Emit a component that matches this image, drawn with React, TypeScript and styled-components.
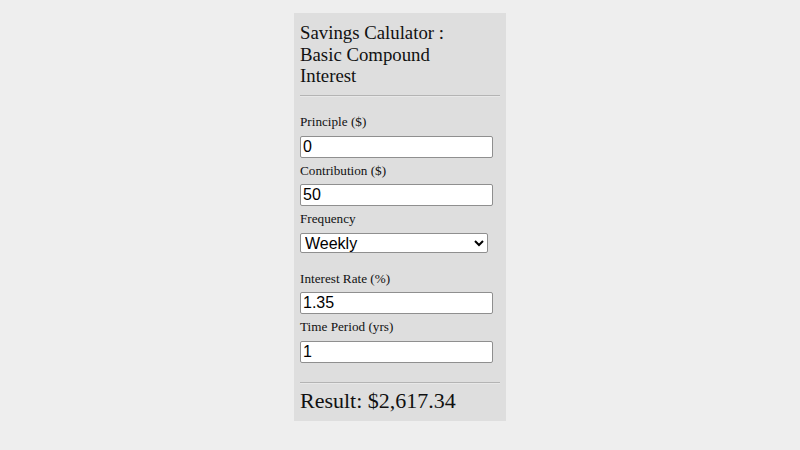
import React, { useState } from 'react';
import styled, { createGlobalStyle } from 'styled-components';

const GlobalStyle = createGlobalStyle`
    html, body {
        margin: 0;
        background-color: #eeeeee;
    }

    body {
        font-family: 'Liberation Serif', 'Times New Roman', serif;
        color: #111;
    }
`;

const App = () => {
    const [principle, setPrinciple] = useState('0');
    const [contribution, setContribution] = useState('50');
    const [frequency, setFrequency] = useState('Weekly');
    const [rate, setRate] = useState('1.35');
    const [years, setYears] = useState('1');

    // 계산 결과 (초기값 기준)
    const result = '$2,617.34';

    return (
        <Page>
            <GlobalStyle />
            <Panel>
                <Title>Savings Calulator : Basic Compound Interest</Title>
                <Divider />
                <Form>
                    <Field>
                        <Label>Principle ($)</Label>
                        <Input value={principle} onChange={(e) => setPrinciple(e.target.value)} />
                    </Field>
                    <Field>
                        <Label>Contribution ($)</Label>
                        <Input value={contribution} onChange={(e) => setContribution(e.target.value)} />
                    </Field>
                    <Field $spaced>
                        <Label>Frequency</Label>
                        <Select value={frequency} onChange={(e) => setFrequency(e.target.value)}>
                            <option>Daily</option>
                            <option>Weekly</option>
                            <option>Monthly</option>
                            <option>Yearly</option>
                        </Select>
                    </Field>
                    <Field>
                        <Label>Interest Rate (%)</Label>
                        <Input value={rate} onChange={(e) => setRate(e.target.value)} />
                    </Field>
                    <Field>
                        <Label>Time Period (yrs)</Label>
                        <Input value={years} onChange={(e) => setYears(e.target.value)} />
                    </Field>
                </Form>
                <Divider $bottom />
                <Result>Result: {result}</Result>
            </Panel>
        </Page>
    );
};

export default App;

const Page = styled.main`
    display: flex;
    justify-content: center;
    padding-top: 13px;
`;

const Panel = styled.section`
    width: 200px;
    padding: 9px 6px 7px 6px;
    background-color: #dedede;
`;

const Title = styled.h1`
    max-width: 180px;
    margin: 0;
    font-size: 18.8px;
    line-height: 21.5px;
    font-weight: normal;
`;

const Divider = styled.hr<{ $bottom?: boolean }>`
    margin: ${(p) => (p.$bottom ? '19px 0 4px 0' : '8px 0 17.5px 0')};
    border: none;
    border-top: 1px solid #b4b4b4;
    border-bottom: 1px solid #e8e8e8;
`;

const Form = styled.div`
    display: flex;
    flex-direction: column;
    gap: 5px;
`;

const Field = styled.div<{ $spaced?: boolean }>`
    display: flex;
    flex-direction: column;
    align-items: flex-start;
    gap: 6px;
    margin-bottom: ${(p) => (p.$spaced ? '13px' : '0')};
`;

const Label = styled.label`
    font-size: 13.2px;
    line-height: 15.5px;
`;

const Input = styled.input`
    box-sizing: border-box;
    width: 193px;
    height: 22px;
    margin: 0;
    padding: 1px 2px;
    font-family: 'Liberation Sans', Arial, sans-serif;
    font-size: 16px;
    color: #000;
    background: #fff;
    border: 1px solid #8f8f8f;
    border-radius: 2px;
`;

const Select = styled.select`
    box-sizing: border-box;
    width: 188px;
    height: 20px;
    margin: 0;
    padding: 0;
    font-family: 'Liberation Sans', Arial, sans-serif;
    font-size: 16px;
    color: #000;
    background: #fff;
    border: 1px solid #8f8f8f;
    border-radius: 2px;
`;

const Result = styled.div`
    font-size: 22px;
    line-height: 26px;
`;
